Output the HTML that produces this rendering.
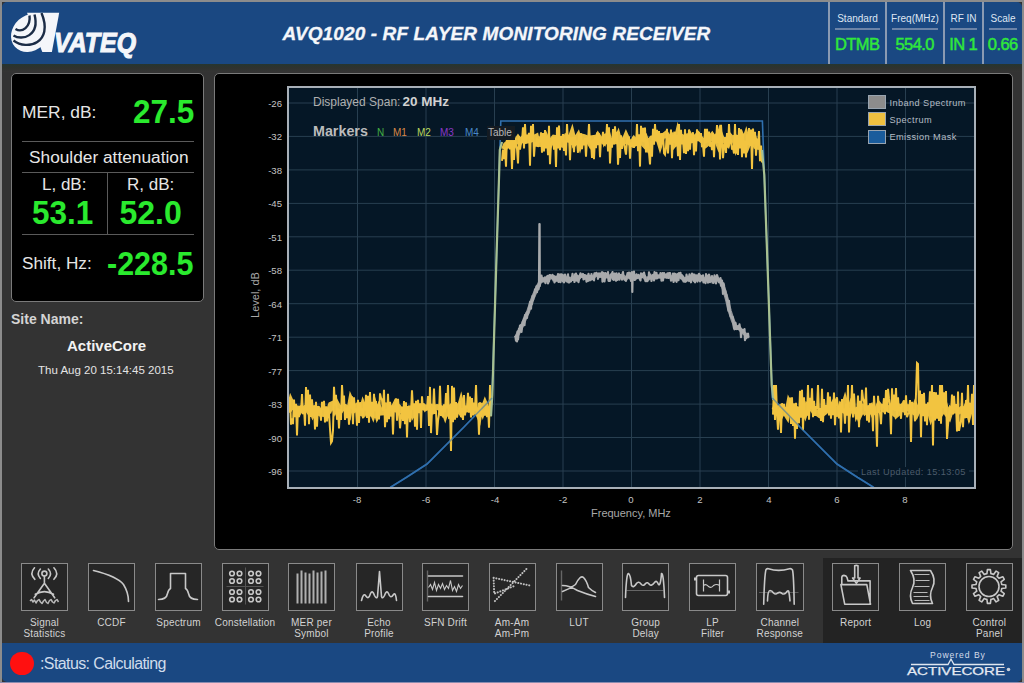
<!DOCTYPE html>
<html><head><meta charset="utf-8">
<style>
*{box-sizing:border-box}
html,body{margin:0;padding:0}
body{width:1024px;height:683px;overflow:hidden;position:relative;background:#333333;font-family:"Liberation Sans",sans-serif}
.abs{position:absolute}
#frameL{left:0;top:0;width:2px;height:683px;background:#8c8c8c}
#frameT{left:0;top:0;width:1024px;height:2px;background:#8c8c8c}
#frameR{left:1022px;top:0;width:2px;height:683px;background:#8c8c8c}
#frameB{left:0;top:682px;width:1024px;height:1px;background:#8a8cb0}
#hdr{left:2px;top:2px;width:1020px;height:62px;background:#1a4882;border-radius:5px 5px 0 0}
#hgrad{left:2px;top:64px;width:1020px;height:8px;background:linear-gradient(#263630,#2f322f 50%,#353434)}
#title{left:282.5px;top:22.5px;font:italic bold 19px "Liberation Sans",sans-serif;color:#f4f6fa;white-space:nowrap;letter-spacing:0.12px;-webkit-text-stroke:0.3px #f4f6fa}
.sep{top:2px;width:2px;height:62px;background:#8a9ab2}
.hbox{top:2px;height:62px;text-align:center;white-space:nowrap}
.hbox .k{position:absolute;left:0;right:0;top:11px;font-size:10px;color:#dfe6f2}
.hbox .ln{position:absolute;top:26.3px;height:2px;background:#6c84a8}
.hbox .v{position:absolute;left:0;right:0;top:33px;font-size:16.5px;letter-spacing:-0.6px;text-indent:-0.6px;color:#30e83a;-webkit-text-stroke:0.45px #30e83a}
#lp{left:11px;top:73px;width:193px;height:229px;background:#000;border:1.5px solid #7a7a7a;border-radius:5px}
#cp{left:213.5px;top:73px;width:799.5px;height:477px;background:#000;border:1.5px solid #7a7a7a;border-radius:5px}
.t{position:absolute;white-space:nowrap}
.lbl{color:#e6e6e6}
.grn{color:#2aea2e;font-weight:bold;transform:scaleY(1.06);transform-origin:0 75%}
.hl{position:absolute;height:1px;background:#5a5a5a}
.yl{position:absolute;left:252px;width:30px;text-align:right;font-size:9.6px;color:#c4c4c4;margin-top:0.6px}
.xl{position:absolute;top:494.3px;width:30px;text-align:center;font-size:9.6px;color:#c4c4c4}
.ib{position:absolute;top:563px;width:47.3px;height:47.5px;background:#262626;border:1.8px solid #8a8a8a}
.il{position:absolute;top:616.5px;width:80px;text-align:center;font-size:10px;line-height:11px;letter-spacing:0.2px;color:#d2d2d2}
#tbdark{left:823px;top:558px;width:199px;height:85px;background:#232323}
#sb{left:2px;top:643px;width:1020px;height:39px;background:#1a4882;border-radius:0 0 5px 5px}
</style></head>
<body>
<div class="abs" id="frameL"></div>
<div class="abs" id="frameT"></div>
<div class="abs" id="frameR"></div>
<div class="abs" id="frameB"></div>
<div class="abs" id="hdr"></div>
<div class="abs" id="hgrad"></div>

<!-- logo -->
<svg class="abs" style="left:0;top:0" width="150" height="64">
  <defs><clipPath id="lg"><ellipse cx="30.5" cy="32.8" rx="21" ry="17.5" transform="rotate(-42 30.5 32.8)"/><path d="M29 12.8 L59.2 12.8 L51.9 51.9 L42.3 51.9 Z"/></clipPath></defs>
  <path d="M27 12.8 L59.2 12.8 L51.9 51.9 L42.3 51.9 Z" fill="#f4f6fa"/>
  <ellipse cx="30.5" cy="32.8" rx="21" ry="17.5" transform="rotate(-42 30.5 32.8)" fill="#f4f6fa"/>
  <g clip-path="url(#lg)" fill="none" stroke="#1b2c46" stroke-width="2.4">
  <path d="M15.5 29 C 22 33, 31 27, 29.5 15.5"/>
  <path d="M13.5 35.5 C 22 41, 40 36, 34.5 14.5"/>
  <path d="M13.5 40.5 C 27 51, 54 43, 41.5 13"/>
  </g>
  <text x="54" y="51.8" font-family="Liberation Sans" font-weight="bold" font-style="italic" font-size="27" fill="#f4f6fa" stroke="#f4f6fa" stroke-width="1.1" textLength="82" lengthAdjust="spacingAndGlyphs">VATEQ</text>
</svg>
<div class="t" id="title">AVQ1020 - RF LAYER MONITORING RECEIVER</div>

<div class="abs sep" style="left:828px"></div>
<div class="abs sep" style="left:885px"></div>
<div class="abs sep" style="left:943px"></div>
<div class="abs sep" style="left:982px"></div>
<div class="abs hbox" style="left:830px;width:55px"><div class="k">Standard</div><div class="ln" style="left:5px;right:5px"></div><div class="v">DTMB</div></div>
<div class="abs hbox" style="left:887px;width:56px"><div class="k">Freq(MHz)</div><div class="ln" style="left:5px;right:5px"></div><div class="v">554.0</div></div>
<div class="abs hbox" style="left:945px;width:37px"><div class="k">RF IN</div><div class="ln" style="left:5px;right:5px"></div><div class="v">IN 1</div></div>
<div class="abs hbox" style="left:984px;width:38px"><div class="k">Scale</div><div class="ln" style="left:5px;right:5px"></div><div class="v">0.66</div></div>

<!-- left panel -->
<div class="abs" id="lp"></div>
<div class="t lbl" style="left:22px;top:102px;font-size:17.4px">MER, dB:</div>
<div class="t grn" style="left:133px;top:94.3px;font-size:31.5px">27.5</div>
<div class="hl" style="left:22px;top:141px;width:172px"></div>
<div class="t lbl" style="left:29px;top:146.8px;font-size:17.3px">Shoulder attenuation</div>
<div class="hl" style="left:22px;top:172px;width:172px"></div>
<div class="hl" style="left:107px;top:172px;width:1px;height:62px"></div>
<div class="t lbl" style="left:42px;top:175px;font-size:17px">L, dB:</div>
<div class="t lbl" style="left:127px;top:175px;font-size:17px">R, dB:</div>
<div class="t grn" style="left:32px;top:195px;font-size:31.5px">53.1</div>
<div class="t grn" style="left:119.5px;top:195px;font-size:32px">52.0</div>
<div class="hl" style="left:22px;top:234px;width:172px"></div>
<div class="t lbl" style="left:22px;top:253px;font-size:17.2px">Shift, Hz:</div>
<div class="t grn" style="left:107px;top:246.7px;font-size:30.5px">-228.5</div>

<div class="t" style="left:11px;top:311px;font-size:14px;font-weight:bold;color:#d4d4d4">Site Name:</div>
<div class="t" style="left:67px;top:337px;font-size:15px;font-weight:bold;color:#f2f2f2">ActiveCore</div>
<div class="t" style="left:38px;top:364px;font-size:11.5px;color:#e4e4e4">Thu Aug 20 15:14:45 2015</div>

<!-- chart panel -->
<div class="abs" id="cp"></div>
<svg width="1024" height="683" style="position:absolute;left:0;top:0">
<defs><clipPath id="pc"><rect x="289" y="88" width="685" height="399"/></clipPath></defs>
<rect x="288" y="87" width="687" height="401" fill="#051726" stroke="#a8b0b8" stroke-width="2"/>
<line x1="289" x2="974" y1="103.0" y2="103.0" stroke="#283f50" stroke-width="1"/>
<line x1="289" x2="974" y1="136.4" y2="136.4" stroke="#283f50" stroke-width="1"/>
<line x1="289" x2="974" y1="169.9" y2="169.9" stroke="#283f50" stroke-width="1"/>
<line x1="289" x2="974" y1="203.4" y2="203.4" stroke="#283f50" stroke-width="1"/>
<line x1="289" x2="974" y1="236.8" y2="236.8" stroke="#283f50" stroke-width="1"/>
<line x1="289" x2="974" y1="270.2" y2="270.2" stroke="#283f50" stroke-width="1"/>
<line x1="289" x2="974" y1="303.7" y2="303.7" stroke="#283f50" stroke-width="1"/>
<line x1="289" x2="974" y1="337.2" y2="337.2" stroke="#283f50" stroke-width="1"/>
<line x1="289" x2="974" y1="370.6" y2="370.6" stroke="#283f50" stroke-width="1"/>
<line x1="289" x2="974" y1="404.1" y2="404.1" stroke="#283f50" stroke-width="1"/>
<line x1="289" x2="974" y1="437.5" y2="437.5" stroke="#283f50" stroke-width="1"/>
<line x1="289" x2="974" y1="471.0" y2="471.0" stroke="#283f50" stroke-width="1"/>
<line y1="88" y2="487" x1="357.5" x2="357.5" stroke="#283f50" stroke-width="1"/>
<line y1="88" y2="487" x1="426.0" x2="426.0" stroke="#283f50" stroke-width="1"/>
<line y1="88" y2="487" x1="494.5" x2="494.5" stroke="#283f50" stroke-width="1"/>
<line y1="88" y2="487" x1="563.0" x2="563.0" stroke="#283f50" stroke-width="1"/>
<line y1="88" y2="487" x1="631.5" x2="631.5" stroke="#283f50" stroke-width="1"/>
<line y1="88" y2="487" x1="700.0" x2="700.0" stroke="#283f50" stroke-width="1"/>
<line y1="88" y2="487" x1="768.5" x2="768.5" stroke="#283f50" stroke-width="1"/>
<line y1="88" y2="487" x1="837.0" x2="837.0" stroke="#283f50" stroke-width="1"/>
<line y1="88" y2="487" x1="905.5" x2="905.5" stroke="#283f50" stroke-width="1"/>
<g clip-path="url(#pc)">
<path d="M380.0 495.0 L391.0 487.0 L407.0 477.0 L427.0 464.0 L464.0 427.0 L492.0 398.0 L500.8 121.0 L762.4 121.0 L772.3 398.0 L800.0 427.0 L837.0 464.0 L857.0 477.0 L873.0 487.0 L884.0 495.0" fill="none" stroke="#3070ae" stroke-width="1.6"/>
<path d="M516.2 337.1 L519.2 331.4 L522.2 325.4 L525.2 317.9 L528.2 311.5 L531.2 302.3 L534.2 294.6 L537.2 288.0 L541.8 278.5 L544.8 280.1 L547.8 280.0 L550.8 276.4 L553.8 278.5 L556.8 278.1 L559.8 279.4 L562.8 277.5 L565.8 279.2 L568.8 278.8 L571.8 278.7 L574.8 277.6 L577.8 279.2 L580.8 275.8 L583.8 276.4 L586.8 278.1 L589.8 277.5 L592.8 278.0 L595.8 274.4 L598.8 275.8 L601.8 275.9 L604.8 276.7 L607.8 276.3 L610.8 276.5 L613.8 276.3 L616.8 278.7 L619.8 275.9 L622.8 276.0 L625.8 278.7 L628.8 274.9 L631.7 277.9 L633.8 276.6 L636.8 276.7 L639.8 277.1 L642.8 274.8 L645.8 279.0 L648.8 277.8 L651.8 277.1 L654.8 276.0 L657.8 276.2 L660.8 276.4 L663.8 275.5 L666.8 276.2 L669.8 276.2 L672.8 278.6 L675.8 277.4 L678.8 276.4 L681.8 276.4 L684.8 280.5 L687.8 278.7 L690.8 277.9 L693.8 278.3 L696.8 278.3 L699.8 276.5 L702.8 278.5 L705.8 278.8 L708.8 279.4 L711.8 279.2 L714.8 279.5 L717.8 278.9 L720.8 281.8 L723.8 288.8 L726.8 299.0 L729.8 311.1 L732.8 320.4 L735.8 327.3 L738.8 327.4 L741.8 331.3 L744.8 333.8 L747.8 336.1" fill="none" stroke="#94969a" stroke-width="4" stroke-linejoin="round"/>
<path d="M515.0 335.9 L515.5 337.2 L516.0 340.7 L516.5 335.5 L517.0 341.5 L517.5 331.5 L518.0 339.4 L518.5 333.1 L519.0 328.7 L519.5 330.4 L520.0 325.6 L520.5 331.5 L521.0 325.1 L521.5 331.8 L522.0 327.1 L522.5 323.4 L523.0 321.0 L523.5 324.3 L524.0 318.6 L524.5 325.2 L525.0 315.0 L525.5 318.4 L526.0 317.5 L526.5 313.0 L527.0 317.8 L527.5 311.9 L528.0 313.9 L528.5 311.6 L529.0 307.2 L529.5 306.9 L530.0 302.0 L530.5 301.9 L531.0 308.7 L531.5 301.1 L532.0 304.0 L532.5 296.1 L533.0 300.2 L533.5 296.6 L534.0 297.0 L534.5 293.3 L535.0 289.3 L535.5 291.0 L536.0 288.7 L536.5 286.3 L537.0 292.1 L537.5 285.6 L538.0 285.8 L538.5 289.4 L539.0 286.6 L539.4 224.0 L539.6 224.0 L539.8 286.0 L539.5 286.2 L540.0 284.5 L540.5 276.0 L541.0 277.9 L541.5 275.5 L542.0 281.7 L542.5 281.5 L543.0 278.5 L543.5 279.0 L544.0 281.4 L544.5 281.7 L545.0 277.4 L545.5 283.1 L546.0 278.3 L546.5 280.9 L547.0 276.6 L547.5 275.9 L548.0 283.5 L548.5 281.8 L549.0 281.5 L549.5 275.0 L550.0 275.0 L550.5 276.1 L551.0 276.4 L551.5 277.4 L552.0 278.1 L552.5 274.8 L553.0 277.4 L553.5 280.5 L554.0 276.1 L554.5 282.4 L555.0 279.7 L555.5 281.1 L556.0 276.6 L556.5 278.3 L557.0 280.7 L557.5 277.4 L558.0 274.1 L558.5 282.0 L559.0 281.5 L559.5 276.7 L560.0 274.4 L560.5 282.1 L561.0 279.7 L561.5 274.3 L562.0 276.2 L562.5 274.9 L563.0 281.4 L563.5 275.7 L564.0 282.5 L564.5 280.9 L565.0 274.5 L565.5 280.3 L566.0 277.4 L566.5 280.7 L567.0 281.5 L567.5 276.2 L568.0 274.3 L568.5 282.5 L569.0 277.5 L569.5 282.3 L570.0 280.0 L570.5 280.4 L571.0 281.3 L571.5 279.3 L572.0 277.6 L572.5 273.8 L573.0 279.9 L573.5 277.3 L574.0 278.1 L574.5 282.0 L575.0 274.3 L575.5 280.4 L576.0 273.5 L576.5 279.8 L577.0 280.7 L577.5 275.5 L578.0 278.2 L578.5 282.2 L579.0 279.0 L579.5 278.1 L580.0 275.3 L580.5 273.4 L581.0 276.3 L581.5 276.8 L582.0 274.7 L582.5 275.7 L583.0 274.0 L583.5 279.5 L584.0 279.1 L584.5 275.0 L585.0 275.0 L585.5 277.6 L586.0 276.9 L586.5 281.6 L587.0 275.9 L587.5 275.4 L588.0 281.0 L588.5 273.9 L589.0 277.9 L589.5 275.7 L590.0 280.3 L590.5 277.7 L591.0 279.7 L591.5 274.0 L592.0 278.8 L592.5 278.1 L593.0 276.8 L593.5 279.7 L594.0 280.3 L594.5 273.4 L595.0 275.1 L595.5 275.7 L596.0 274.2 L596.5 272.8 L597.0 274.9 L597.5 274.1 L598.0 278.9 L598.5 276.5 L599.0 273.3 L599.5 275.3 L600.0 276.6 L600.5 275.6 L601.0 273.7 L601.5 272.8 L602.0 272.2 L602.5 281.6 L603.0 279.3 L603.5 272.9 L604.0 278.9 L604.5 281.4 L605.0 277.4 L605.5 273.0 L606.0 276.7 L606.5 276.1 L607.0 273.8 L607.5 277.2 L608.0 272.0 L608.5 280.8 L609.0 278.1 L609.5 277.9 L610.0 280.9 L610.5 278.2 L611.0 274.3 L611.5 274.2 L612.0 273.2 L612.5 272.1 L613.0 279.3 L613.5 279.9 L614.0 274.7 L614.5 273.6 L615.0 278.0 L615.5 279.9 L616.0 280.7 L616.5 273.4 L617.0 279.3 L617.5 279.8 L618.0 278.9 L618.5 274.9 L619.0 273.5 L619.5 279.7 L620.0 274.8 L620.5 275.3 L621.0 277.0 L621.5 275.3 L622.0 279.7 L622.5 274.0 L623.0 272.1 L623.5 277.2 L624.0 277.8 L624.5 279.6 L625.0 278.5 L625.5 280.4 L626.0 280.8 L626.5 276.5 L627.0 276.5 L627.5 273.2 L628.0 274.6 L628.5 277.3 L629.0 272.5 L629.5 278.3 L630.0 273.3 L630.5 276.0 L631.0 281.0 L631.5 272.6 L632.0 272.1 L632.3 292.0 L632.7 274.0 L632.5 275.9 L633.0 273.5 L633.5 278.6 L634.0 271.7 L634.5 279.8 L635.0 279.9 L635.5 279.3 L636.0 275.8 L636.5 274.4 L637.0 278.1 L637.5 276.7 L638.0 275.8 L638.5 275.0 L639.0 275.9 L639.5 278.1 L640.0 279.7 L640.5 280.4 L641.0 273.3 L641.5 274.6 L642.0 276.0 L642.5 277.2 L643.0 275.1 L643.5 273.6 L644.0 272.6 L644.5 274.9 L645.0 276.2 L645.5 281.1 L646.0 280.5 L646.5 280.1 L647.0 281.2 L647.5 281.0 L648.0 277.8 L648.5 279.6 L649.0 272.4 L649.5 278.3 L650.0 277.7 L650.5 274.7 L651.0 277.3 L651.5 281.0 L652.0 276.5 L652.5 278.1 L653.0 274.8 L653.5 275.2 L654.0 280.4 L654.5 272.2 L655.0 273.7 L655.5 278.5 L656.0 276.2 L656.5 272.8 L657.0 278.3 L657.5 275.6 L658.0 277.6 L658.5 276.0 L659.0 277.1 L659.5 277.4 L660.0 275.8 L660.5 273.1 L661.0 273.8 L661.5 280.6 L662.0 277.4 L662.5 273.2 L663.0 280.4 L663.5 274.6 L664.0 273.1 L664.5 277.3 L665.0 274.6 L665.5 276.9 L666.0 277.5 L666.5 274.4 L667.0 277.7 L667.5 273.3 L668.0 277.2 L668.5 277.9 L669.0 273.1 L669.5 276.2 L670.0 273.0 L670.5 276.6 L671.0 280.6 L671.5 277.7 L672.0 279.3 L672.5 279.7 L673.0 273.5 L673.5 282.0 L674.0 279.4 L674.5 273.5 L675.0 280.5 L675.5 276.3 L676.0 274.2 L676.5 281.8 L677.0 278.0 L677.5 280.0 L678.0 273.9 L678.5 280.1 L679.0 273.2 L679.5 274.9 L680.0 276.3 L680.5 272.9 L681.0 278.4 L681.5 274.8 L682.0 275.7 L682.5 279.6 L683.0 276.9 L683.5 281.4 L684.0 278.8 L684.5 281.3 L685.0 278.3 L685.5 281.7 L686.0 281.3 L686.5 274.6 L687.0 280.2 L687.5 276.3 L688.0 280.4 L688.5 279.6 L689.0 281.0 L689.5 274.3 L690.0 276.7 L690.5 280.3 L691.0 282.3 L691.5 280.2 L692.0 273.7 L692.5 279.1 L693.0 274.3 L693.5 278.6 L694.0 281.1 L694.5 274.5 L695.0 282.3 L695.5 279.9 L696.0 275.9 L696.5 275.4 L697.0 277.8 L697.5 281.6 L698.0 279.2 L698.5 274.7 L699.0 273.8 L699.5 274.7 L700.0 281.4 L700.5 275.5 L701.0 279.1 L701.5 276.6 L702.0 280.4 L702.5 277.5 L703.0 275.3 L703.5 282.3 L704.0 279.1 L704.5 280.6 L705.0 281.8 L705.5 283.1 L706.0 274.2 L706.5 277.4 L707.0 275.6 L707.5 279.0 L708.0 282.6 L708.5 281.9 L709.0 274.6 L709.5 276.0 L710.0 282.2 L710.5 280.9 L711.0 278.2 L711.5 279.0 L712.0 276.0 L712.5 282.6 L713.0 278.3 L713.5 283.0 L714.0 280.5 L714.5 275.4 L715.0 277.8 L715.5 276.8 L716.0 283.3 L716.5 280.4 L717.0 275.2 L717.5 276.5 L718.0 278.7 L718.5 280.5 L719.0 282.3 L719.5 281.3 L720.0 281.4 L720.5 278.1 L721.0 285.7 L721.5 283.6 L722.0 280.6 L722.5 286.7 L723.0 293.8 L723.5 283.3 L724.0 285.2 L724.5 293.3 L725.0 290.2 L725.5 291.9 L726.0 296.3 L726.5 295.1 L727.0 300.5 L727.5 301.7 L728.0 308.6 L728.5 310.7 L729.0 300.9 L729.5 308.9 L730.0 313.2 L730.5 316.1 L731.0 316.6 L731.5 316.6 L732.0 318.3 L732.5 316.8 L733.0 317.5 L733.5 325.3 L734.0 328.0 L734.5 329.3 L735.0 326.8 L735.5 322.8 L736.0 328.9 L736.5 329.1 L737.0 326.9 L737.5 329.0 L738.0 326.1 L738.5 329.1 L739.0 327.9 L739.5 324.3 L740.0 328.1 L740.5 328.5 L741.0 337.1 L741.5 331.5 L742.0 330.7 L742.5 329.8 L743.0 330.2 L743.5 332.1 L744.0 330.1 L744.5 329.1 L745.0 340.1 L745.5 335.6 L746.0 336.0 L746.5 338.1 L747.0 335.4 L747.5 334.4 L748.0 333.7 L748.5 337.1 L749.0 337.7" fill="none" stroke="#a8aaac" stroke-width="2.2" stroke-linejoin="round"/>
<path d="M289.0 411.0 L291.0 402.3 L293.0 406.8 L295.0 407.9 L297.0 408.4 L299.0 411.8 L301.0 408.8 L303.0 409.8 L305.0 408.2 L307.0 408.6 L309.0 411.3 L311.0 408.5 L313.0 413.7 L315.0 410.3 L317.0 412.9 L319.0 410.6 L321.0 413.6 L323.0 413.8 L325.0 411.6 L327.0 410.3 L329.0 410.5 L331.0 404.7 L333.0 403.8 L335.0 409.0 L337.0 404.7 L339.0 408.5 L341.0 409.9 L343.0 407.1 L345.0 407.1 L347.0 408.9 L349.0 412.3 L351.0 401.0 L353.0 405.5 L355.0 408.6 L357.0 406.4 L359.0 412.2 L361.0 413.0 L363.0 405.7 L365.0 410.7 L367.0 406.8 L369.0 405.6 L371.0 408.8 L373.0 413.7 L375.0 407.1 L377.0 413.8 L379.0 408.4 L381.0 412.6 L383.0 412.4 L385.0 409.2 L387.0 403.1 L389.0 415.9 L391.0 409.6 L393.0 409.4 L395.0 405.2 L397.0 409.0 L399.0 407.9 L401.0 410.3 L403.0 410.6 L405.0 408.2 L407.0 409.4 L409.0 417.0 L411.0 406.0 L413.0 413.5 L415.0 410.2 L417.0 408.2 L419.0 407.1 L421.0 406.6 L423.0 406.2 L425.0 407.8 L427.0 407.5 L429.0 407.5 L431.0 407.0 L433.0 409.9 L435.0 407.4 L437.0 407.0 L439.0 407.4 L441.0 408.3 L443.0 408.5 L445.0 414.0 L447.0 407.3 L449.0 412.0 L451.0 407.3 L453.0 405.3 L455.0 410.5 L457.0 407.6 L459.0 410.1 L461.0 403.1 L463.0 411.5 L465.0 408.9 L467.0 409.4 L469.0 408.9 L471.0 408.9 L473.0 407.6 L475.0 411.3 L477.0 410.5 L479.0 415.2 L481.0 403.3 L483.0 410.2 L485.0 404.6 L487.0 409.4 L489.0 412.2 L491.0 411.6" fill="none" stroke="#eabf40" stroke-width="6"/>
<path d="M504.0 149.4 L506.0 144.8 L508.0 143.3 L510.0 139.3 L512.0 138.4 L514.0 142.1 L516.0 141.8 L518.0 138.8 L520.0 141.7 L522.0 139.7 L524.0 137.6 L526.0 140.8 L528.0 140.4 L530.0 137.3 L532.0 139.0 L534.0 137.9 L536.0 136.9 L538.0 146.1 L540.0 139.3 L542.0 138.7 L544.0 142.8 L546.0 137.7 L548.0 142.0 L550.0 144.1 L552.0 140.1 L554.0 137.8 L556.0 138.1 L558.0 144.3 L560.0 143.8 L562.0 144.4 L564.0 141.4 L566.0 137.5 L568.0 139.2 L570.0 139.9 L572.0 134.1 L574.0 142.2 L576.0 139.9 L578.0 136.6 L580.0 143.3 L582.0 136.6 L584.0 137.1 L586.0 137.9 L588.0 139.4 L590.0 142.9 L592.0 138.2 L594.0 137.9 L596.0 140.3 L598.0 136.4 L600.0 139.3 L602.0 140.1 L604.0 141.8 L606.0 136.4 L608.0 135.7 L610.0 142.8 L612.0 140.8 L614.0 141.2 L616.0 141.2 L618.0 136.6 L620.0 144.2 L622.0 142.6 L624.0 141.6 L626.0 136.7 L628.0 141.1 L630.0 142.7 L632.0 143.7 L634.0 140.2 L636.0 142.9 L638.0 142.0 L640.0 140.2 L642.0 142.1 L644.0 144.3 L646.0 140.3 L648.0 145.7 L650.0 141.3 L652.0 138.4 L654.0 137.9 L656.0 138.0 L658.0 136.8 L660.0 143.5 L662.0 136.7 L664.0 135.6 L666.0 134.0 L668.0 136.8 L670.0 139.3 L672.0 137.2 L674.0 144.5 L676.0 142.2 L678.0 133.5 L680.0 140.1 L682.0 137.2 L684.0 138.2 L686.0 137.1 L688.0 141.7 L690.0 136.4 L692.0 140.2 L694.0 139.8 L696.0 137.0 L698.0 135.2 L700.0 138.3 L702.0 140.2 L704.0 141.2 L706.0 144.3 L708.0 142.6 L710.0 138.0 L712.0 135.7 L714.0 138.9 L716.0 137.1 L718.0 142.5 L720.0 134.4 L722.0 139.7 L724.0 140.0 L726.0 139.8 L728.0 142.6 L730.0 136.6 L732.0 138.8 L734.0 138.0 L736.0 145.7 L738.0 139.9 L740.0 142.0 L742.0 137.6 L744.0 142.4 L746.0 136.4 L748.0 144.0 L750.0 139.1 L752.0 139.7 L754.0 138.7 L756.0 146.1 L758.0 146.7 L760.0 145.6" fill="none" stroke="#eabf40" stroke-width="6"/>
<path d="M773.0 406.2 L775.0 407.2 L777.0 409.7 L779.0 408.3 L781.0 414.7 L783.0 410.8 L785.0 411.9 L787.0 415.1 L789.0 404.5 L791.0 409.1 L793.0 410.4 L795.0 414.6 L797.0 409.4 L799.0 410.3 L801.0 412.0 L803.0 408.1 L805.0 412.8 L807.0 406.5 L809.0 408.7 L811.0 408.2 L813.0 409.4 L815.0 412.9 L817.0 412.8 L819.0 414.4 L821.0 412.1 L823.0 413.4 L825.0 411.9 L827.0 409.6 L829.0 407.7 L831.0 408.6 L833.0 404.9 L835.0 410.9 L837.0 413.9 L839.0 413.7 L841.0 406.5 L843.0 408.6 L845.0 402.1 L847.0 409.1 L849.0 411.7 L851.0 405.9 L853.0 410.5 L855.0 410.8 L857.0 410.0 L859.0 415.8 L861.0 411.7 L863.0 408.4 L865.0 411.6 L867.0 409.8 L869.0 408.9 L871.0 407.1 L873.0 412.5 L875.0 410.6 L877.0 410.0 L879.0 405.1 L881.0 407.6 L883.0 408.9 L885.0 406.5 L887.0 407.7 L889.0 409.9 L891.0 410.6 L893.0 412.3 L895.0 403.9 L897.0 414.1 L899.0 412.4 L901.0 407.5 L903.0 408.7 L905.0 405.5 L907.0 408.2 L909.0 407.3 L911.0 410.2 L913.0 411.4 L915.0 406.4 L917.0 412.3 L919.0 407.8 L921.0 408.2 L923.0 407.0 L925.0 408.9 L927.0 409.7 L929.0 407.4 L931.0 415.1 L933.0 409.4 L935.0 413.0 L937.0 411.1 L939.0 409.9 L941.0 413.0 L943.0 410.1 L945.0 406.0 L947.0 413.6 L949.0 416.1 L951.0 409.5 L953.0 410.9 L955.0 410.2 L957.0 410.6 L959.0 411.2 L961.0 409.5 L963.0 411.6 L965.0 409.9 L967.0 405.7 L969.0 413.2 L971.0 406.3 L973.0 404.9" fill="none" stroke="#eabf40" stroke-width="6"/>
<path d="M289.0 412.8 L290.0 397.8 L291.0 424.6 L292.0 418.5 L293.0 424.1 L294.0 399.6 L295.0 417.3 L296.0 403.7 L297.0 435.5 L298.0 407.4 L299.0 417.2 L300.0 406.4 L301.0 412.1 L302.0 394.1 L303.0 414.3 L304.0 407.6 L305.0 425.6 L306.0 387.1 L307.0 411.5 L308.0 389.8 L309.0 424.2 L310.0 394.6 L311.0 416.9 L312.0 399.2 L313.0 415.8 L314.0 405.3 L315.0 429.4 L316.0 401.9 L317.0 426.6 L318.0 406.0 L319.0 412.6 L320.0 409.1 L321.0 420.6 L322.0 401.9 L323.0 410.0 L324.0 400.8 L325.0 422.5 L326.0 406.4 L327.0 421.4 L328.0 407.7 L329.0 413.0 L330.0 428.9 L331.0 442.8 L332.0 441.1 L333.0 430.4 L334.0 386.7 L335.0 405.5 L336.0 394.9 L337.0 419.8 L338.0 408.3 L339.0 428.5 L340.0 409.0 L341.0 419.9 L342.0 385.0 L343.0 403.9 L344.0 395.5 L345.0 419.9 L346.0 407.5 L347.0 418.1 L348.0 406.3 L349.0 424.6 L350.0 402.1 L351.0 408.3 L352.0 396.4 L353.0 424.1 L354.0 397.4 L355.0 411.3 L356.0 408.3 L357.0 425.6 L358.0 399.7 L359.0 423.0 L360.0 402.2 L361.0 409.4 L362.0 409.2 L363.0 418.3 L364.0 402.3 L365.0 410.7 L366.0 394.8 L367.0 418.0 L368.0 395.7 L369.0 422.7 L370.0 392.0 L371.0 416.4 L372.0 401.7 L373.0 417.3 L374.0 393.8 L375.0 411.3 L376.0 401.1 L377.0 420.6 L378.0 404.7 L379.0 419.5 L380.0 393.4 L381.0 397.9 L382.0 399.8 L383.0 410.8 L384.0 389.8 L385.0 427.2 L386.0 408.7 L387.0 422.3 L388.0 393.8 L389.0 419.1 L390.0 401.8 L391.0 410.7 L392.0 405.3 L393.0 434.5 L394.0 405.5 L395.0 410.5 L396.0 398.3 L397.0 420.7 L398.0 398.8 L399.0 410.5 L400.0 428.3 L401.0 417.2 L402.0 407.1 L403.0 421.0 L404.0 401.0 L405.0 424.2 L406.0 402.2 L407.0 437.5 L408.0 406.3 L409.0 410.9 L410.0 422.1 L411.0 413.0 L412.0 390.4 L413.0 409.8 L414.0 403.2 L415.0 426.7 L416.0 400.9 L417.0 429.8 L418.0 399.9 L419.0 413.1 L420.0 403.4 L421.0 427.9 L422.0 396.3 L423.0 409.9 L424.0 406.5 L425.0 410.6 L426.0 409.7 L427.0 408.6 L428.0 396.0 L429.0 425.9 L430.0 386.9 L431.0 433.1 L432.0 410.0 L433.0 411.6 L434.0 388.5 L435.0 413.9 L436.0 410.4 L437.0 435.0 L438.0 420.9 L439.0 414.3 L440.0 385.8 L441.0 416.0 L442.0 408.1 L443.0 417.5 L444.0 404.4 L445.0 412.5 L446.0 393.1 L447.0 408.5 L448.0 385.0 L449.0 418.8 L450.0 406.4 L451.0 451.0 L452.0 385.9 L453.0 422.3 L454.0 387.5 L455.0 419.6 L456.0 402.0 L457.0 417.5 L458.0 410.9 L459.0 410.9 L460.0 401.2 L461.0 417.1 L462.0 408.0 L463.0 420.0 L464.0 395.0 L465.0 415.5 L466.0 406.7 L467.0 407.4 L468.0 392.9 L469.0 412.6 L470.0 396.6 L471.0 417.5 L472.0 398.0 L473.0 415.4 L474.0 402.7 L475.0 410.8 L476.0 385.0 L477.0 416.2 L478.0 408.1 L479.0 434.8 L480.0 402.2 L481.0 415.8 L482.0 411.2 L483.0 411.6 L484.0 410.8 L485.0 415.5 L486.0 405.9 L487.0 417.1 L488.0 406.6 L489.0 427.7 L490.0 385.0 L491.0 416.3" fill="none" stroke="#f2c440" stroke-width="2"/>
<path d="M502.0 160.9 L503.0 149.5 L504.0 159.2 L505.0 147.3 L506.0 166.8 L507.0 135.2 L508.0 148.4 L509.0 142.0 L510.0 149.3 L511.0 140.8 L512.0 169.0 L513.0 141.1 L514.0 159.9 L515.0 138.7 L516.0 144.6 L517.0 149.0 L518.0 163.5 L519.0 136.4 L520.0 149.5 L521.0 143.0 L522.0 141.3 L523.0 127.3 L524.0 148.4 L525.0 124.0 L526.0 143.2 L527.0 134.7 L528.0 138.6 L529.0 132.9 L530.0 165.8 L531.0 125.7 L532.0 139.5 L533.0 124.0 L534.0 156.8 L535.0 142.0 L536.0 145.7 L537.0 137.5 L538.0 147.0 L539.0 139.2 L540.0 142.3 L541.0 132.3 L542.0 152.8 L543.0 133.1 L544.0 151.4 L545.0 130.1 L546.0 148.5 L547.0 136.0 L548.0 155.2 L549.0 125.8 L550.0 164.1 L551.0 143.3 L552.0 141.7 L553.0 137.1 L554.0 149.6 L555.0 137.1 L556.0 166.9 L557.0 127.4 L558.0 148.4 L559.0 125.6 L560.0 150.1 L561.0 136.1 L562.0 138.8 L563.0 134.1 L564.0 151.0 L565.0 140.5 L566.0 155.4 L567.0 124.0 L568.0 142.4 L569.0 134.8 L570.0 160.3 L571.0 137.3 L572.0 144.8 L573.0 136.8 L574.0 152.2 L575.0 136.7 L576.0 143.0 L577.0 140.3 L578.0 152.8 L579.0 133.8 L580.0 149.1 L581.0 133.2 L582.0 149.2 L583.0 139.8 L584.0 145.3 L585.0 138.1 L586.0 156.7 L587.0 137.6 L588.0 142.3 L589.0 124.0 L590.0 142.0 L591.0 141.5 L592.0 157.9 L593.0 139.6 L594.0 159.3 L595.0 137.1 L596.0 148.2 L597.0 132.6 L598.0 145.1 L599.0 133.4 L600.0 157.1 L601.0 139.5 L602.0 142.1 L603.0 131.8 L604.0 144.2 L605.0 142.3 L606.0 142.8 L607.0 124.0 L608.0 151.4 L609.0 127.3 L610.0 163.4 L611.0 141.5 L612.0 147.7 L613.0 129.0 L614.0 144.4 L615.0 126.4 L616.0 141.4 L617.0 131.7 L618.0 164.7 L619.0 148.1 L620.0 157.9 L621.0 135.4 L622.0 148.8 L623.0 137.5 L624.0 142.6 L625.0 149.0 L626.0 154.6 L627.0 141.2 L628.0 138.0 L629.0 137.6 L630.0 158.6 L631.0 142.5 L632.0 144.8 L633.0 136.8 L634.0 147.9 L635.0 137.3 L636.0 145.9 L637.0 124.0 L638.0 151.1 L639.0 134.3 L640.0 166.6 L641.0 125.8 L642.0 141.7 L643.0 127.7 L644.0 142.3 L645.0 127.6 L646.0 152.5 L647.0 139.3 L648.0 143.8 L649.0 152.6 L650.0 164.4 L651.0 140.9 L652.0 156.8 L653.0 128.7 L654.0 144.8 L655.0 124.0 L656.0 141.3 L657.0 129.8 L658.0 142.6 L659.0 131.1 L660.0 147.5 L661.0 133.2 L662.0 144.1 L663.0 133.1 L664.0 153.1 L665.0 154.5 L666.0 147.1 L667.0 128.8 L668.0 153.5 L669.0 137.8 L670.0 144.7 L671.0 129.6 L672.0 158.3 L673.0 134.8 L674.0 142.8 L675.0 131.7 L676.0 146.5 L677.0 135.0 L678.0 156.2 L679.0 124.0 L680.0 159.9 L681.0 129.8 L682.0 144.2 L683.0 140.1 L684.0 153.2 L685.0 129.3 L686.0 153.9 L687.0 135.3 L688.0 151.2 L689.0 129.5 L690.0 149.8 L691.0 133.7 L692.0 141.5 L693.0 132.2 L694.0 155.2 L695.0 137.7 L696.0 151.4 L697.0 129.4 L698.0 141.1 L699.0 132.0 L700.0 141.1 L701.0 133.1 L702.0 147.1 L703.0 144.3 L704.0 156.6 L705.0 128.9 L706.0 143.1 L707.0 128.7 L708.0 142.3 L709.0 131.6 L710.0 146.8 L711.0 142.2 L712.0 150.1 L713.0 133.1 L714.0 157.1 L715.0 135.1 L716.0 143.3 L717.0 125.1 L718.0 143.0 L719.0 129.4 L720.0 159.4 L721.0 124.7 L722.0 141.1 L723.0 158.1 L724.0 146.3 L725.0 138.0 L726.0 153.0 L727.0 133.1 L728.0 147.6 L729.0 124.0 L730.0 143.4 L731.0 139.7 L732.0 149.7 L733.0 147.3 L734.0 153.5 L735.0 124.0 L736.0 153.5 L737.0 135.1 L738.0 155.0 L739.0 128.0 L740.0 148.4 L741.0 129.4 L742.0 157.2 L743.0 133.9 L744.0 153.4 L745.0 140.5 L746.0 157.4 L747.0 134.4 L748.0 145.0 L749.0 128.1 L750.0 146.0 L751.0 129.6 L752.0 169.0 L753.0 128.6 L754.0 144.1 L755.0 131.7 L756.0 155.7 L757.0 138.6 L758.0 145.6 L759.0 131.0 L760.0 161.2 L761.0 145.5 L762.0 162.5" fill="none" stroke="#f2c440" stroke-width="2"/>
<path d="M773.0 414.6 L774.0 385.0 L775.0 420.0 L776.0 385.0 L777.0 413.8 L778.0 429.8 L779.0 410.3 L780.0 408.3 L781.0 432.9 L782.0 403.3 L783.0 408.8 L784.0 403.8 L785.0 414.9 L786.0 407.1 L787.0 410.1 L788.0 407.0 L789.0 412.9 L790.0 397.5 L791.0 423.9 L792.0 397.3 L793.0 425.9 L794.0 403.4 L795.0 438.6 L796.0 402.8 L797.0 429.0 L798.0 406.8 L799.0 423.1 L800.0 390.9 L801.0 417.6 L802.0 389.8 L803.0 430.1 L804.0 397.4 L805.0 417.9 L806.0 410.2 L807.0 415.5 L808.0 385.0 L809.0 419.7 L810.0 397.7 L811.0 408.7 L812.0 388.2 L813.0 417.3 L814.0 400.8 L815.0 414.3 L816.0 406.0 L817.0 409.4 L818.0 385.0 L819.0 413.4 L820.0 408.2 L821.0 420.8 L822.0 388.8 L823.0 422.2 L824.0 399.0 L825.0 412.0 L826.0 405.2 L827.0 412.2 L828.0 392.4 L829.0 415.5 L830.0 396.6 L831.0 418.6 L832.0 402.2 L833.0 415.2 L834.0 392.5 L835.0 425.3 L836.0 400.2 L837.0 397.4 L838.0 408.5 L839.0 418.3 L840.0 403.7 L841.0 432.4 L842.0 399.1 L843.0 412.5 L844.0 408.4 L845.0 423.7 L846.0 403.6 L847.0 415.6 L848.0 385.0 L849.0 432.4 L850.0 408.2 L851.0 410.7 L852.0 385.0 L853.0 417.4 L854.0 393.6 L855.0 410.9 L856.0 418.7 L857.0 416.6 L858.0 395.5 L859.0 427.1 L860.0 400.9 L861.0 415.4 L862.0 389.8 L863.0 398.4 L864.0 401.5 L865.0 411.0 L866.0 387.5 L867.0 420.6 L868.0 405.2 L869.0 422.4 L870.0 403.3 L871.0 414.3 L872.0 404.5 L873.0 431.2 L874.0 395.9 L875.0 411.1 L876.0 415.1 L877.0 446.7 L878.0 395.8 L879.0 409.6 L880.0 413.5 L881.0 424.1 L882.0 404.1 L883.0 407.9 L884.0 398.2 L885.0 414.1 L886.0 390.0 L887.0 411.4 L888.0 388.8 L889.0 398.7 L890.0 406.0 L891.0 434.2 L892.0 388.3 L893.0 410.2 L894.0 394.5 L895.0 410.6 L896.0 388.1 L897.0 415.6 L898.0 397.2 L899.0 411.1 L900.0 406.9 L901.0 418.8 L902.0 404.0 L903.0 402.5 L904.0 400.3 L905.0 415.3 L906.0 395.4 L907.0 417.1 L908.0 414.1 L909.0 413.1 L910.0 400.1 L911.0 442.1 L912.0 401.8 L913.0 413.1 L914.0 408.8 L915.0 421.3 L916.0 394.0 L917.0 363.0 L918.0 364.0 L919.0 413.4 L920.0 390.4 L921.0 437.3 L922.0 394.0 L923.0 416.2 L924.0 392.8 L925.0 421.4 L926.0 403.7 L927.0 425.1 L928.0 402.4 L929.0 409.6 L930.0 391.4 L931.0 416.4 L932.0 385.0 L933.0 445.5 L934.0 392.0 L935.0 420.4 L936.0 392.4 L937.0 418.8 L938.0 394.7 L939.0 420.9 L940.0 385.0 L941.0 423.8 L942.0 385.0 L943.0 408.1 L944.0 392.4 L945.0 412.4 L946.0 391.0 L947.0 438.9 L948.0 425.3 L949.0 414.8 L950.0 407.0 L951.0 413.5 L952.0 394.6 L953.0 414.4 L954.0 395.7 L955.0 410.0 L956.0 404.1 L957.0 431.5 L958.0 391.6 L959.0 430.7 L960.0 425.7 L961.0 421.1 L962.0 392.9 L963.0 427.2 L964.0 406.2 L965.0 418.3 L966.0 400.1 L967.0 417.9 L968.0 385.0 L969.0 422.2 L970.0 402.7 L971.0 413.8 L972.0 393.8 L973.0 424.9 L974.0 385.0" fill="none" stroke="#f2c440" stroke-width="2"/>
<path d="M491.0 416.3 L492.3 395.0 L496.7 250.0 L499.1 175.0 L499.8 150.0 L502.0 142.0" fill="none" stroke="#a8c090" stroke-width="2.2"/>
<path d="M762.0 150.0 L764.3 175.0 L767.0 250.0 L771.7 385.0 L773.3 400.0" fill="none" stroke="#a8c090" stroke-width="2.2"/>
<path d="M380.0 495.0 L391.0 487.0 L407.0 477.0 L427.0 464.0 L464.0 427.0 L492.0 398.0" fill="none" stroke="#3070ae" stroke-width="1.6" opacity="0.55"/>
<path d="M772.3 398.0 L800.0 427.0 L837.0 464.0 L857.0 477.0 L873.0 487.0 L884.0 495.0" fill="none" stroke="#3070ae" stroke-width="1.6" opacity="0.55"/>
</g>
</svg>
<div class="yl" style="top:97px">-26</div><div class="yl" style="top:130px">-32</div><div class="yl" style="top:164px">-38</div><div class="yl" style="top:197px">-45</div><div class="yl" style="top:231px">-51</div><div class="yl" style="top:264px">-58</div><div class="yl" style="top:298px">-64</div><div class="yl" style="top:331px">-71</div><div class="yl" style="top:365px">-77</div><div class="yl" style="top:398px">-83</div><div class="yl" style="top:432px">-90</div><div class="yl" style="top:465px">-96</div>
<div class="xl" style="left:342px">-8</div><div class="xl" style="left:411px">-6</div><div class="xl" style="left:480px">-4</div><div class="xl" style="left:548px">-2</div><div class="xl" style="left:616px">0</div><div class="xl" style="left:685px">2</div><div class="xl" style="left:754px">4</div><div class="xl" style="left:822px">6</div><div class="xl" style="left:890px">8</div>
<div class="t" style="left:591px;top:507px;font-size:11px;color:#a8a8a8">Frequency, MHz</div>
<div class="t" style="left:232px;top:289px;font-size:11px;color:#a8a8a8;transform:rotate(-90deg);transform-origin:center;width:46px;text-align:center">Level, dB</div>

<div class="t" style="left:313px;top:94px;font-size:12px;color:#b0b0b0">Displayed Span:<b style="font-size:13.5px;color:#d2d2d2;margin-left:2px">20 MHz</b></div>
<div class="t" style="left:313px;top:123px;font-size:14.3px;font-weight:bold;color:#bcbcbc">Markers</div>
<div class="t" style="left:377px;top:126.5px;font-size:10px;color:#44b044">N</div>
<div class="t" style="left:393px;top:126.5px;font-size:10px;color:#d88848">M1</div>
<div class="t" style="left:417px;top:126.5px;font-size:10px;color:#b8d860">M2</div>
<div class="t" style="left:440px;top:126.5px;font-size:10px;color:#8a38c8">M3</div>
<div class="t" style="left:465px;top:126.5px;font-size:10px;color:#4888c8">M4</div>
<div class="t" style="left:487px;top:125px;font-size:10px;color:#b8b8b8;background:#141b22;padding:1px 3px 2px 1px;top:125.5px">Table</div>

<div class="abs" style="left:868px;top:95px;width:18px;height:14px;background:#8c8c8c;border:1.4px solid #98a4b0"></div>
<div class="abs" style="left:868px;top:112px;width:18px;height:14px;background:#eec040;border:1.4px solid #98a4b0"></div>
<div class="abs" style="left:868px;top:129.5px;width:18px;height:14px;background:#1a5c9c;border:1.4px solid #98a4b0"></div>
<div class="t" style="left:889.5px;top:98px;font-size:9.2px;letter-spacing:0.42px;color:#b4bcc4">Inband Spectrum</div>
<div class="t" style="left:889.5px;top:115px;font-size:9.2px;letter-spacing:0.42px;color:#b4bcc4">Spectrum</div>
<div class="t" style="left:889.5px;top:132px;font-size:9.2px;letter-spacing:0.42px;color:#b4bcc4">Emission Mask</div>
<div class="t" style="left:858px;top:467px;font-size:9.2px;color:#4c5c6c;background:#051726;padding:0 3px;letter-spacing:0.42px">Last Updated: 15:13:05</div>

<!-- toolbar -->
<div class="abs" id="tbdark"></div>
<div class="ib" style="left:21.0px"><svg width="44" height="44" viewBox="1.5 1.5 44 44" style="position:absolute;left:0;top:0"><path d="M19.9 6.5 Q15.6 11.2 19.9 16 M14 5.3 Q8.6 11.2 14.4 16.8 M27.8 6.5 Q32.2 11.2 27.8 16 M33.4 5.3 Q39 11.2 33.4 16.8" fill="none" stroke="#c8c8c8" stroke-width="1.6" stroke-linecap="round" stroke-linejoin="round"/>
   <circle cx="23.9" cy="11.1" r="2.5" fill="none" stroke="#c8c8c8" stroke-width="1.6" stroke-linecap="round" stroke-linejoin="round"/><path d="M23.9 13.6 V20.7 M23.9 20.7 L13.6 35.3 M23.9 20.7 L34.2 35.3 M14.8 31.8 Q23.9 26.5 33 31.8" fill="none" stroke="#c8c8c8" stroke-width="1.6" stroke-linecap="round" stroke-linejoin="round"/>
   <path d="M9.5 38.5 L11 37 L12.5 39.5 L14 37.5 L15.5 40.5 L17 38 L18.5 37 L20 39.5 L21.5 41 L23 38.5 L24.5 37 L26 40 L27.5 41 L29 38 L30.5 37 L32 39.5 L33.5 40.5 L35 38 L36.5 37 L38 39.5" fill="none" stroke="#b8b8b8" stroke-width="1.5" stroke-linejoin="round"/></svg></div>
<div class="il" style="left:4.5px">Signal<br>Statistics</div>
<div class="ib" style="left:88.0px"><svg width="44" height="44" viewBox="1.5 1.5 44 44" style="position:absolute;left:0;top:0"><path d="M6 8 Q30 14 36 22 Q41 30 41 39" fill="none" stroke="#c8c8c8" stroke-width="1.6" stroke-linecap="round" stroke-linejoin="round"/></svg></div>
<div class="il" style="left:71.5px">CCDF</div>
<div class="ib" style="left:155.0px"><svg width="44" height="44" viewBox="1.5 1.5 44 44" style="position:absolute;left:0;top:0"><path d="M4 37 Q12 37 13 31 Q14 27 16 26 L16 11 L31 11 L31 26 Q33 27 34 31 Q35 37 43 37" fill="none" stroke="#c8c8c8" stroke-width="1.6" stroke-linecap="round" stroke-linejoin="round"/></svg></div>
<div class="il" style="left:138.5px">Spectrum</div>
<div class="ib" style="left:221.5px"><svg width="44" height="44" viewBox="1.5 1.5 44 44" style="position:absolute;left:0;top:0"><circle cx="10.5" cy="11.0" r="2.3" fill="none" stroke="#c8c8c8" stroke-width="1.6" stroke-linecap="round" stroke-linejoin="round"/><circle cx="10.5" cy="18.5" r="2.3" fill="none" stroke="#c8c8c8" stroke-width="1.6" stroke-linecap="round" stroke-linejoin="round"/><circle cx="10.5" cy="29.5" r="2.3" fill="none" stroke="#c8c8c8" stroke-width="1.6" stroke-linecap="round" stroke-linejoin="round"/><circle cx="10.5" cy="37.0" r="2.3" fill="none" stroke="#c8c8c8" stroke-width="1.6" stroke-linecap="round" stroke-linejoin="round"/><circle cx="18.0" cy="11.0" r="2.3" fill="none" stroke="#c8c8c8" stroke-width="1.6" stroke-linecap="round" stroke-linejoin="round"/><circle cx="18.0" cy="18.5" r="2.3" fill="none" stroke="#c8c8c8" stroke-width="1.6" stroke-linecap="round" stroke-linejoin="round"/><circle cx="18.0" cy="29.5" r="2.3" fill="none" stroke="#c8c8c8" stroke-width="1.6" stroke-linecap="round" stroke-linejoin="round"/><circle cx="18.0" cy="37.0" r="2.3" fill="none" stroke="#c8c8c8" stroke-width="1.6" stroke-linecap="round" stroke-linejoin="round"/><circle cx="29.5" cy="11.0" r="2.3" fill="none" stroke="#c8c8c8" stroke-width="1.6" stroke-linecap="round" stroke-linejoin="round"/><circle cx="29.5" cy="18.5" r="2.3" fill="none" stroke="#c8c8c8" stroke-width="1.6" stroke-linecap="round" stroke-linejoin="round"/><circle cx="29.5" cy="29.5" r="2.3" fill="none" stroke="#c8c8c8" stroke-width="1.6" stroke-linecap="round" stroke-linejoin="round"/><circle cx="29.5" cy="37.0" r="2.3" fill="none" stroke="#c8c8c8" stroke-width="1.6" stroke-linecap="round" stroke-linejoin="round"/><circle cx="37.0" cy="11.0" r="2.3" fill="none" stroke="#c8c8c8" stroke-width="1.6" stroke-linecap="round" stroke-linejoin="round"/><circle cx="37.0" cy="18.5" r="2.3" fill="none" stroke="#c8c8c8" stroke-width="1.6" stroke-linecap="round" stroke-linejoin="round"/><circle cx="37.0" cy="29.5" r="2.3" fill="none" stroke="#c8c8c8" stroke-width="1.6" stroke-linecap="round" stroke-linejoin="round"/><circle cx="37.0" cy="37.0" r="2.3" fill="none" stroke="#c8c8c8" stroke-width="1.6" stroke-linecap="round" stroke-linejoin="round"/><path d="M24 5 V42 M5 24 H42" stroke="#555" stroke-width="1"/></svg></div>
<div class="il" style="left:205.0px">Constellation</div>
<div class="ib" style="left:288.0px"><svg width="44" height="44" viewBox="1.5 1.5 44 44" style="position:absolute;left:0;top:0"><line x1="10" x2="10" y1="11" y2="41" stroke="#b0b0b0" stroke-width="2"/><line x1="14" x2="14" y1="8" y2="41" stroke="#b0b0b0" stroke-width="2"/><line x1="18" x2="18" y1="10" y2="41" stroke="#b0b0b0" stroke-width="2"/><line x1="22" x2="22" y1="11" y2="41" stroke="#b0b0b0" stroke-width="2"/><line x1="26" x2="26" y1="8" y2="41" stroke="#b0b0b0" stroke-width="2"/><line x1="30" x2="30" y1="10" y2="41" stroke="#b0b0b0" stroke-width="2"/><line x1="34" x2="34" y1="9" y2="41" stroke="#b0b0b0" stroke-width="2"/><line x1="38" x2="38" y1="8" y2="41" stroke="#b0b0b0" stroke-width="2"/></svg></div>
<div class="il" style="left:271.5px">MER per<br>Symbol</div>
<div class="ib" style="left:355.5px"><svg width="44" height="44" viewBox="1.5 1.5 44 44" style="position:absolute;left:0;top:0"><path d="M6 38 Q8 30 10 33 Q13 38 15 31 Q17 27 19 33 Q21 37 22 34 L24 9 L26 34 Q27 37 29 33 Q31 27 33 31 Q35 37 38 32 Q40 29 41 38" fill="none" stroke="#c8c8c8" stroke-width="1.6" stroke-linecap="round" stroke-linejoin="round"/></svg></div>
<div class="il" style="left:339.0px">Echo<br>Profile</div>
<div class="ib" style="left:422.0px"><svg width="44" height="44" viewBox="1.5 1.5 44 44" style="position:absolute;left:0;top:0"><path d="M6 8 V39" stroke="#666" stroke-width="1.4"/><path d="M7 13.5 H41 M7 34 H41" fill="none" stroke="#c8c8c8" stroke-width="1.6" stroke-linecap="round" stroke-linejoin="round"/><path d="M7 25 L9 22 L11 27 L13 20 L15 28 L17 22 L19 26 L21 21 L23 27 L25 23 L27 26 L29 18 L31 28 L33 24 L35 29 L37 22 L39 26 L41 23" fill="none" stroke="#c8c8c8" stroke-width="1.1"/></svg></div>
<div class="il" style="left:405.5px">SFN Drift</div>
<div class="ib" style="left:488.5px"><svg width="44" height="44" viewBox="1.5 1.5 44 44" style="position:absolute;left:0;top:0"><path d="M6.4 38.6 L39.4 5 M5.1 15.3 L41.3 23 M5.1 15.3 L5.7 31.2 L26 23.5" fill="none" stroke="#c0c0c0" stroke-width="2" stroke-dasharray="0.1 2.7" stroke-linecap="round"/></svg></div>
<div class="il" style="left:472.0px">Am-Am<br>Am-Pm</div>
<div class="ib" style="left:555.5px"><svg width="44" height="44" viewBox="1.5 1.5 44 44" style="position:absolute;left:0;top:0"><path d="M6 8 V38" stroke="#666" stroke-width="1.4"/><path d="M7 29 Q15 26 20 22 Q25 12 28 15 Q31 18 33 25 Q36 28 40 30 M7 23 Q14 23 22 28 Q32 32 40 34" fill="none" stroke="#c8c8c8" stroke-width="1.6" stroke-linecap="round" stroke-linejoin="round"/></svg></div>
<div class="il" style="left:539.0px">LUT</div>
<div class="ib" style="left:622.2px"><svg width="44" height="44" viewBox="1.5 1.5 44 44" style="position:absolute;left:0;top:0"><path d="M5 28 H42" stroke="#666" stroke-width="1.2"/><path d="M4 35 Q5 10 7 11 Q9 12 10 23 Q12 26 15 21 Q17 18 20 22 Q22 24 24 21 Q26 19 28 22 Q30 24 33 20 Q35 17 37 22 Q39 24 40 11 Q42 10 43 35" fill="none" stroke="#c8c8c8" stroke-width="1.6" stroke-linecap="round" stroke-linejoin="round"/></svg></div>
<div class="il" style="left:605.7px">Group<br>Delay</div>
<div class="ib" style="left:689.2px"><svg width="44" height="44" viewBox="1.5 1.5 44 44" style="position:absolute;left:0;top:0"><rect x="8" y="13" width="31" height="20" rx="2" fill="none" stroke="#c8c8c8" stroke-width="1.6" stroke-linecap="round" stroke-linejoin="round"/><path d="M5.5 16.5 H8 M39 29.5 H41.5" stroke="#c8c8c8" stroke-width="3"/><path d="M15 17 V29 M31 17 V29 M15 23 Q18 21 20 24 Q23 26 25 23 Q28 21 31 23" fill="none" stroke="#c8c8c8" stroke-width="1.2"/></svg></div>
<div class="il" style="left:672.7px">LP<br>Filter</div>
<div class="ib" style="left:756.3px"><svg width="44" height="44" viewBox="1.5 1.5 44 44" style="position:absolute;left:0;top:0"><path d="M3.5 30 H43" stroke="#5a5a5a" stroke-width="1.2"/><path d="M8.2 41.7 Q9 12 10.5 7 Q11.5 5.9 13 6.2 Q23 9.5 34 6.2 Q36 5.9 37 7.5 Q38.2 12 38.7 41.7 M12 38.4 Q12.3 28 14.5 28 Q16.5 28.2 18 30.5 Q20 32.5 22.3 30.5 Q24.3 29 26.3 30.8 Q28.5 32.5 30.5 30.2 Q32.3 27.5 33.2 28.8 Q34 32 34.5 38.4" fill="none" stroke="#c8c8c8" stroke-width="1.6" stroke-linecap="round" stroke-linejoin="round"/></svg></div>
<div class="il" style="left:739.8px">Channel<br>Response</div>
<div class="ib" style="left:832.2px"><svg width="44" height="44" viewBox="1.5 1.5 44 44" style="position:absolute;left:0;top:0"><path d="M9.4 22.1 L35.3 22.1 L39 41.7 L13.2 41.7 Z M10.3 22 V15 Q10.5 12.9 12.5 12.9 Q14.8 13 15.5 15 L16.5 18.4 H38.6 V41.7" fill="none" stroke="#c8c8c8" stroke-width="1.6" stroke-linecap="round" stroke-linejoin="round"/><path d="M23.2 3.3 Q24.8 2.5 26.5 3.3 V15.5 H28.6 L24.85 20.9 L21.1 15.5 H23.2 Z" fill="none" stroke="#c8c8c8" stroke-width="1.6" stroke-linecap="round" stroke-linejoin="round"/></svg></div>
<div class="il" style="left:815.7px">Report</div>
<div class="ib" style="left:899.2px"><svg width="44" height="44" viewBox="1.5 1.5 44 44" style="position:absolute;left:0;top:0"><path d="M12 8 H32 Q38 17 34 25 Q30 33 34 41 H14 Q10 33 14 25 Q18 17 12 8 Z" fill="none" stroke="#c8c8c8" stroke-width="1.6" stroke-linecap="round" stroke-linejoin="round"/><path d="M16 12 H31 M17 18 H31 M16 24 H31 M15 30 H29 M15 34 H30 M16 38 H31" stroke="#b8b8b8" stroke-width="1"/></svg></div>
<div class="il" style="left:882.7px">Log</div>
<div class="ib" style="left:965.8px"><svg width="44" height="44" viewBox="1.5 1.5 44 44" style="position:absolute;left:0;top:0"><path d="M20.0 11.4 L21.4 11.2 L21.9 7.1 L24.9 7.1 L25.4 11.2 L26.8 11.4 L28.1 11.9 L30.6 8.6 L33.2 10.1 L31.6 13.9 L32.6 14.8 L33.5 15.8 L37.3 14.2 L38.8 16.8 L35.5 19.3 L36.0 20.6 L36.2 22.0 L40.3 22.5 L40.3 25.5 L36.2 26.0 L36.0 27.4 L35.5 28.7 L38.8 31.2 L37.3 33.8 L33.5 32.2 L32.6 33.2 L31.6 34.1 L33.2 37.9 L30.6 39.4 L28.1 36.1 L26.8 36.6 L25.4 36.8 L24.9 40.9 L21.9 40.9 L21.4 36.8 L20.0 36.6 L18.7 36.1 L16.2 39.4 L13.6 37.9 L15.2 34.1 L14.2 33.2 L13.3 32.2 L9.5 33.8 L8.0 31.2 L11.3 28.7 L10.8 27.4 L10.6 26.0 L6.5 25.5 L6.5 22.5 L10.6 22.0 L10.8 20.6 L11.3 19.3 L8.0 16.8 L9.5 14.2 L13.3 15.8 L14.2 14.8 L15.2 13.9 L13.6 10.1 L16.2 8.6 L18.7 11.9Z" fill="none" stroke="#c8c8c8" stroke-width="1.6" stroke-linecap="round" stroke-linejoin="round"/><circle cx="23.5" cy="24" r="10" fill="none" stroke="#c8c8c8" stroke-width="1.6" stroke-linecap="round" stroke-linejoin="round"/></svg></div>
<div class="il" style="left:949.3px">Control<br>Panel</div>

<!-- status bar -->
<div class="abs" id="sb"></div>
<div class="abs" style="left:10px;top:651.5px;width:23.5px;height:23.5px;border-radius:50%;background:#ff1010"></div>
<div class="t" style="left:40px;top:654.5px;font-size:16px;letter-spacing:-0.6px;color:#cfdcec">:Status: Calculating</div>
<div class="t" style="left:930px;top:650px;font-size:8.6px;letter-spacing:0.95px;color:#d4dcea">Powered By</div>
<svg class="abs" style="left:900px;top:656px" width="120" height="24">
  <path d="M11 8.5 H48 L51 3 L54 8.5 H104" fill="none" stroke="#dfe6f0" stroke-width="1.3"/>
  <text x="7" y="19" font-family="Liberation Sans" font-size="11.3" fill="#e4eaf2" stroke="#e4eaf2" stroke-width="0.25" textLength="98" lengthAdjust="spacingAndGlyphs">ACTIVECORE</text>
  <circle cx="108.5" cy="13.5" r="1.8" fill="#c8d0dc"/>
</svg>
</body></html>
